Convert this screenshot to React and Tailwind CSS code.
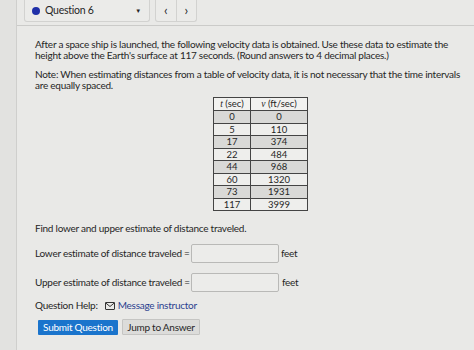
import React from "react";

const rows = [
  ["0", "0"],
  ["5", "110"],
  ["17", "374"],
  ["22", "484"],
  ["44", "968"],
  ["60", "1320"],
  ["73", "1931"],
  ["117", "3999"],
];

export default function App() {
  return (
    <div className="w-[474px] h-[350px] overflow-hidden flex bg-[#e9e9e7] text-[#262626] text-[10px] leading-[11px] tracking-[-0.25px]" style={{ fontFamily: "Lato, 'Open Sans', sans-serif" }}>
      <div className="w-[17px] shrink-0 bg-[#e2e2e0] border-r border-[#cfcfcd]" />
      <div className="flex-1 flex flex-col">
        <div className="h-[26px] border-b border-[#cbcbc9] flex items-start pl-[7px] gap-[5px]">
          <div className="w-[126px] h-[22px] border border-t-0 border-[#d2d2d0] rounded-b-[3px] bg-[#ebebe9] flex items-center pl-[7px] pr-[8px]">
            <span className="w-[8px] h-[8px] rounded-full bg-[#1f2fa8] mr-[5px]" />
            <span className="flex-1 text-[10.5px]">Question 6</span>
            <span className="text-[6px]">▼</span>
          </div>
          <div className="w-[42px] h-[22px] border border-t-0 border-[#d2d2d0] rounded-b-[3px] bg-[#ebebe9] flex text-[13px]">
            <div className="flex-1 flex items-center justify-center border-r border-[#d2d2d0]">‹</div>
            <div className="flex-1 flex items-center justify-center">›</div>
          </div>
        </div>
        <div className="pl-[18px] pr-[10px] pt-[13px] flex flex-col">
          <p>After a space ship is launched, the following velocity data is obtained. Use these data to estimate the height above the Earth's surface at 117 seconds. (Round answers to 4 decimal places.)</p>
          <p className="mt-[8px]">Note: When estimating distances from a table of velocity data, it is not necessary that the time intervals are equally spaced.</p>
          <div className="flex mt-[6px] ml-[178px]">
            <table className="border-collapse border border-[#444] text-center text-[9.5px] leading-[11px] tracking-normal">
              <thead>
                <tr className="bg-[#f2f2f0]">
                  <th className="font-normal border border-[#444] w-[37px] h-[13px]"><i style={{ fontFamily: "'Liberation Serif', serif" }}>t</i> (sec)</th>
                  <th className="font-normal border border-[#444] w-[57px] h-[13px]"><i style={{ fontFamily: "'Liberation Serif', serif" }}>v</i> (ft/sec)</th>
                </tr>
              </thead>
              <tbody>
                {rows.map((r, i) => (
                  <tr key={i} className={i % 2 === 0 ? "bg-[#d9d9d7]" : "bg-[#eeeeec]"}>
                    <td className="border border-[#444] h-[12.5px] p-0">{r[0]}</td>
                    <td className="border border-[#444] h-[12.5px] p-0">{r[1]}</td>
                  </tr>
                ))}
              </tbody>
            </table>
          </div>
          <p className="mt-[12px]">Find lower and upper estimate of distance traveled.</p>
          <div className="flex items-center mt-[10px] whitespace-nowrap">
            <span className="w-[156px]">Lower estimate of distance traveled =</span>
            <span className="w-[88px] h-[19px] border border-[#b9b9b7] rounded-[2px] bg-[#ececea]" />
            <span className="ml-[2px]">feet</span>
          </div>
          <div className="flex items-center mt-[10px] whitespace-nowrap">
            <span className="w-[156px]">Upper estimate of distance traveled =</span>
            <span className="w-[88px] h-[19px] border border-[#b9b9b7] rounded-[2px] bg-[#ececea]" />
            <span className="ml-[3px]">feet</span>
          </div>
          <div className="flex items-center mt-[8px]">
            <span>Question Help:</span>
            <svg className="ml-[7px]" width="10" height="8" viewBox="0 0 10 8" fill="none" stroke="#333" strokeWidth="1">
              <rect x="0.5" y="0.5" width="9" height="7" rx="0.5" />
              <path d="M0.5 0.8 L5 4.5 L9.5 0.8" />
            </svg>
            <span className="ml-[3px] text-[#2b3f8f]">Message instructor</span>
          </div>
          <div className="flex items-center mt-[8px] ml-[3px] gap-[4px]">
            <div className="w-[80px] h-[15px] bg-[#1a74cc] text-white flex items-center justify-center rounded-[1px]">Submit Question</div>
            <div className="w-[78px] h-[16px] bg-[#dcdcda] border border-[#c5c5c3] flex items-center justify-center rounded-[1px]">Jump to Answer</div>
          </div>
        </div>
      </div>
    </div>
  );
}
